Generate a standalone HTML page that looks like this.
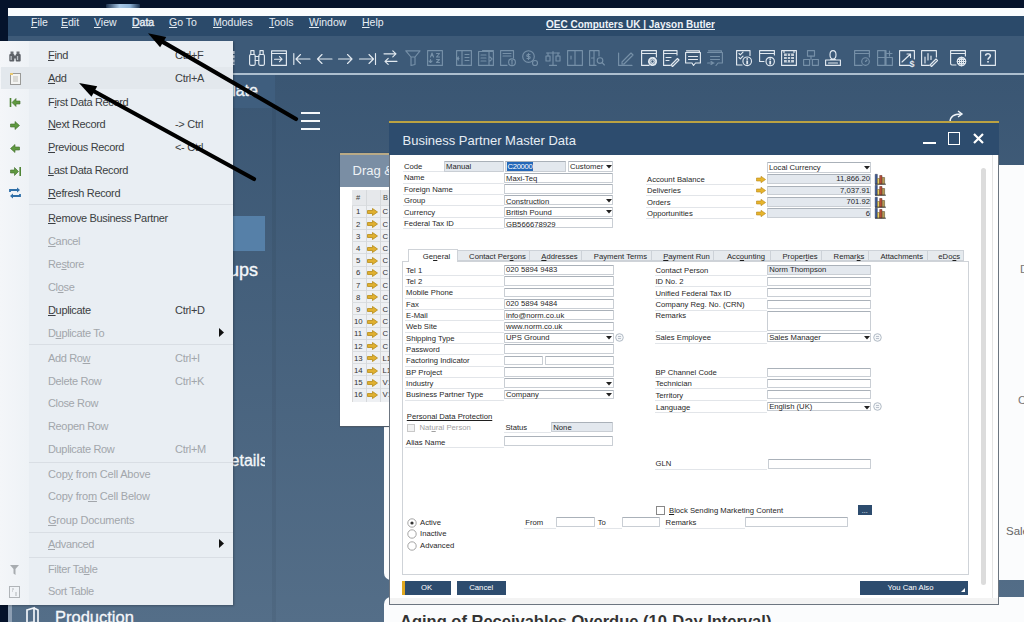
<!DOCTYPE html>
<html><head><meta charset="utf-8"><style>
*{margin:0;padding:0;box-sizing:border-box}
html,body{width:1024px;height:622px;overflow:hidden}
body{position:relative;font-family:"Liberation Sans",sans-serif;background:#3e5b7a}
.a{position:absolute}
.t{position:absolute;white-space:nowrap}

u{text-decoration:underline;text-underline-offset:1px;text-decoration-thickness:1px}
svg{position:absolute;overflow:visible}
</style></head><body>
<div class="a" style="left:8px;top:74px;width:1016px;height:548px;background:linear-gradient(#3a5673,#546e88)"></div>
<div class="a" style="left:0px;top:0px;width:1024px;height:8px;background:#05132b"></div>
<div class="a" style="left:0px;top:0px;width:8px;height:622px;background:#05132b"></div>
<div class="a" style="left:8px;top:8px;width:1016px;height:8px;background:#f9fcfe"></div>
<div class="a" style="left:106px;top:3.5px;width:34px;height:4px;background:linear-gradient(90deg,rgba(120,170,220,.2),#a9c8e6 40%,#8fb3d6 70%,rgba(120,170,220,.2));border-radius:1px"></div>
<div class="a" style="left:8px;top:16px;width:1016px;height:20px;background:#2b4a6a"></div>
<div class="a" style="left:8px;top:36px;width:1016px;height:37px;background:#3d5a78"></div>
<div class="a" style="left:233px;top:73px;width:791px;height:1.5px;background:#adbfcf"></div>
<div class="t" style="left:31px;top:15.54px;font-size:10.5px;line-height:13.65px;color:#e6edf4;"><u>F</u>ile</div>
<div class="t" style="left:61px;top:15.54px;font-size:10.5px;line-height:13.65px;color:#e6edf4;"><u>E</u>dit</div>
<div class="t" style="left:94px;top:15.54px;font-size:10.5px;line-height:13.65px;color:#e6edf4;"><u>V</u>iew</div>
<div class="t" style="left:132px;top:15.54px;font-size:10.5px;line-height:13.65px;color:#e6edf4;-webkit-text-stroke:0.4px #e6edf4"><u>D</u>ata</div>
<div class="t" style="left:169px;top:15.54px;font-size:10.5px;line-height:13.65px;color:#e6edf4;"><u>G</u>o To</div>
<div class="t" style="left:213px;top:15.54px;font-size:10.5px;line-height:13.65px;color:#e6edf4;"><u>M</u>odules</div>
<div class="t" style="left:269px;top:15.54px;font-size:10.5px;line-height:13.65px;color:#e6edf4;"><u>T</u>ools</div>
<div class="t" style="left:309px;top:15.54px;font-size:10.5px;line-height:13.65px;color:#e6edf4;"><u>W</u>indow</div>
<div class="t" style="left:362px;top:15.54px;font-size:10.5px;line-height:13.65px;color:#e6edf4;"><u>H</u>elp</div>
<div class="t" style="left:546px;top:18.04px;font-size:10px;line-height:13.0px;color:#eef3f8;font-weight:bold"><span style="border-bottom:1px solid #e8eef5;line-height:0.9;display:inline-block">OEC Computers UK | Jayson Butler</span></div>
<div class="a" style="left:8px;top:74px;width:267px;height:548px;background:linear-gradient(#3a5673,#546e88)"></div>
<div class="a" style="left:8px;top:74px;width:267px;height:34px;background:#3f5e7e"></div>
<div class="a" style="left:272px;top:108px;width:4px;height:514px;background:rgba(0,0,0,.05)"></div>
<div class="a" style="left:233px;top:73px;width:60px;height:1.5px;background:#adbfcf"></div>
<div class="a" style="left:8px;top:74px;width:257px;height:548px;overflow:hidden"><div class="t" style="left:185px;top:7.75px;font-size:16px;line-height:18px;color:#eef2f6;-webkit-text-stroke:0.35px #eef2f6">Template</div><div class="a" style="left:120px;top:142px;width:137px;height:35px;background:#5680a8"></div><div class="t" style="left:191px;top:185.5px;font-size:18px;line-height:20px;color:#f4f7fa;-webkit-text-stroke:0.35px #f4f7fa">Groups</div><div class="t" style="left:211px;top:378.4px;font-size:16px;line-height:18px;color:#f4f7fa;font-weight:normal;-webkit-text-stroke:0.3px #f4f7fa">Details</div></div>
<div class="a" style="left:8px;top:605px;width:4px;height:17px;background:#8d9fb3"></div>
<svg style="left:25px;top:607px" width="16" height="16" viewBox="0 0 16 16"><path d="M2 3L9 1V15L2 16Z M9 1L13 3V16H2" fill="none" stroke="#f0f4f8" stroke-width="1.7"/></svg>
<div class="t" style="left:55px;top:607.06px;font-size:16.5px;line-height:21.45px;color:#f4f7fa;-webkit-text-stroke:0.3px #f4f7fa">Production</div>
<div class="a" style="left:301px;top:112px;width:19px;height:2.4px;background:#f4f7fa"></div>
<div class="a" style="left:301px;top:120px;width:19px;height:2.4px;background:#f4f7fa"></div>
<div class="a" style="left:301px;top:128px;width:19px;height:2.4px;background:#f4f7fa"></div>
<div class="a" style="left:384px;top:164.5px;width:660px;height:415px;background:#fbfcfd;border-radius:7px"></div>
<div class="a" style="left:384px;top:597px;width:660px;height:40px;background:#fbfcfd;border-radius:7px"></div>
<div class="t" style="left:1006px;top:524.04px;font-size:11.5px;line-height:14.95px;color:#666;">Sales</div>
<div class="t" style="left:1018px;top:393.14px;font-size:11.5px;line-height:14.95px;color:#777;">C</div>
<div class="t" style="left:1020px;top:261.54px;font-size:11.5px;line-height:14.95px;color:#777;">D</div>
<div class="t" style="left:400px;top:610.96px;font-size:16.5px;line-height:21.45px;color:#333;font-weight:bold">Aging of Receivables Overdue (10-Day Interval)</div>
<svg style="left:948px;top:109px" width="18" height="14" viewBox="0 0 18 14"><path d="M2 13C2 7 6 5 13 5" fill="none" stroke="#f0f4f8" stroke-width="1.4"/><path d="M10 2L14 5L10 8" fill="none" stroke="#f0f4f8" stroke-width="1.4"/></svg>
<div class="a" style="left:339.5px;top:153px;width:60px;height:274px;background:#fff;border-bottom:1px solid #4d5a68;box-shadow:0 0 1px rgba(0,0,0,.3)"></div>
<div class="a" style="left:340px;top:153px;width:60px;height:2px;background:#b9aa86"></div>
<div class="a" style="left:340px;top:155px;width:60px;height:32px;background:#7a8ea4"></div>
<div class="t" style="left:352.5px;top:163.05px;font-size:13px;line-height:16.9px;color:#eef2f6;">Drag &amp; Drop</div>
<div class="a" style="left:352px;top:190px;width:40px;height:212px;background:#eef0f3;border-left:1px solid #d8d8d8;border-top:1px solid #d8d8d8"></div>
<div class="a" style="left:352px;top:190px;width:40px;height:15px;background:#e6e8eb"></div>
<div class="t" style="left:356px;top:192.53px;font-size:7.5px;line-height:9.75px;color:#444;">#</div>
<div class="t" style="left:383px;top:192.53px;font-size:7.5px;line-height:9.75px;color:#444;">B</div>
<div class="a" style="left:352px;top:205px;width:40px;height:1px;background:#dadde0"></div>
<div class="t" style="left:356px;top:207.43px;font-size:7.8px;line-height:10.14px;color:#333;">1</div>
<svg style="left:367px;top:208.0px" width="11" height="8" viewBox="0 0 11 8"><path d="M0.5 2.5H5.5V0.5L10.5 4L5.5 7.5V5.5H0.5Z" fill="#e0b030" stroke="#b58a18" stroke-width=".8"/></svg>
<div class="t" style="left:382.5px;top:207.43px;font-size:7.8px;line-height:10.14px;color:#333;">C</div>
<div class="a" style="left:352px;top:217px;width:40px;height:1px;background:#dadde0"></div>
<div class="t" style="left:356px;top:219.63px;font-size:7.8px;line-height:10.14px;color:#333;">2</div>
<svg style="left:367px;top:220.2px" width="11" height="8" viewBox="0 0 11 8"><path d="M0.5 2.5H5.5V0.5L10.5 4L5.5 7.5V5.5H0.5Z" fill="#e0b030" stroke="#b58a18" stroke-width=".8"/></svg>
<div class="t" style="left:382.5px;top:219.63px;font-size:7.8px;line-height:10.14px;color:#333;">C</div>
<div class="a" style="left:352px;top:229px;width:40px;height:1px;background:#dadde0"></div>
<div class="t" style="left:356px;top:231.83px;font-size:7.8px;line-height:10.14px;color:#333;">3</div>
<svg style="left:367px;top:232.4px" width="11" height="8" viewBox="0 0 11 8"><path d="M0.5 2.5H5.5V0.5L10.5 4L5.5 7.5V5.5H0.5Z" fill="#e0b030" stroke="#b58a18" stroke-width=".8"/></svg>
<div class="t" style="left:382.5px;top:231.83px;font-size:7.8px;line-height:10.14px;color:#333;">C</div>
<div class="a" style="left:352px;top:241px;width:40px;height:1px;background:#dadde0"></div>
<div class="t" style="left:356px;top:244.03px;font-size:7.8px;line-height:10.14px;color:#333;">4</div>
<svg style="left:367px;top:244.6px" width="11" height="8" viewBox="0 0 11 8"><path d="M0.5 2.5H5.5V0.5L10.5 4L5.5 7.5V5.5H0.5Z" fill="#e0b030" stroke="#b58a18" stroke-width=".8"/></svg>
<div class="t" style="left:382.5px;top:244.03px;font-size:7.8px;line-height:10.14px;color:#333;">C</div>
<div class="a" style="left:352px;top:253px;width:40px;height:1px;background:#dadde0"></div>
<div class="t" style="left:356px;top:256.23px;font-size:7.8px;line-height:10.14px;color:#333;">5</div>
<svg style="left:367px;top:256.8px" width="11" height="8" viewBox="0 0 11 8"><path d="M0.5 2.5H5.5V0.5L10.5 4L5.5 7.5V5.5H0.5Z" fill="#e0b030" stroke="#b58a18" stroke-width=".8"/></svg>
<div class="t" style="left:382.5px;top:256.23px;font-size:7.8px;line-height:10.14px;color:#333;">C</div>
<div class="a" style="left:352px;top:266px;width:40px;height:1px;background:#dadde0"></div>
<div class="t" style="left:356px;top:268.43px;font-size:7.8px;line-height:10.14px;color:#333;">6</div>
<svg style="left:367px;top:269.0px" width="11" height="8" viewBox="0 0 11 8"><path d="M0.5 2.5H5.5V0.5L10.5 4L5.5 7.5V5.5H0.5Z" fill="#e0b030" stroke="#b58a18" stroke-width=".8"/></svg>
<div class="t" style="left:382.5px;top:268.43px;font-size:7.8px;line-height:10.14px;color:#333;">C</div>
<div class="a" style="left:352px;top:278px;width:40px;height:1px;background:#dadde0"></div>
<div class="t" style="left:356px;top:280.63px;font-size:7.8px;line-height:10.14px;color:#333;">7</div>
<svg style="left:367px;top:281.2px" width="11" height="8" viewBox="0 0 11 8"><path d="M0.5 2.5H5.5V0.5L10.5 4L5.5 7.5V5.5H0.5Z" fill="#e0b030" stroke="#b58a18" stroke-width=".8"/></svg>
<div class="t" style="left:382.5px;top:280.63px;font-size:7.8px;line-height:10.14px;color:#333;">C</div>
<div class="a" style="left:352px;top:290px;width:40px;height:1px;background:#dadde0"></div>
<div class="t" style="left:356px;top:292.83px;font-size:7.8px;line-height:10.14px;color:#333;">8</div>
<svg style="left:367px;top:293.4px" width="11" height="8" viewBox="0 0 11 8"><path d="M0.5 2.5H5.5V0.5L10.5 4L5.5 7.5V5.5H0.5Z" fill="#e0b030" stroke="#b58a18" stroke-width=".8"/></svg>
<div class="t" style="left:382.5px;top:292.83px;font-size:7.8px;line-height:10.14px;color:#333;">C</div>
<div class="a" style="left:352px;top:302px;width:40px;height:1px;background:#dadde0"></div>
<div class="t" style="left:356px;top:305.03px;font-size:7.8px;line-height:10.14px;color:#333;">9</div>
<svg style="left:367px;top:305.6px" width="11" height="8" viewBox="0 0 11 8"><path d="M0.5 2.5H5.5V0.5L10.5 4L5.5 7.5V5.5H0.5Z" fill="#e0b030" stroke="#b58a18" stroke-width=".8"/></svg>
<div class="t" style="left:382.5px;top:305.03px;font-size:7.8px;line-height:10.14px;color:#333;">C</div>
<div class="a" style="left:352px;top:314px;width:40px;height:1px;background:#dadde0"></div>
<div class="t" style="left:354px;top:317.23px;font-size:7.8px;line-height:10.14px;color:#333;">10</div>
<svg style="left:367px;top:317.8px" width="11" height="8" viewBox="0 0 11 8"><path d="M0.5 2.5H5.5V0.5L10.5 4L5.5 7.5V5.5H0.5Z" fill="#e0b030" stroke="#b58a18" stroke-width=".8"/></svg>
<div class="t" style="left:382.5px;top:317.23px;font-size:7.8px;line-height:10.14px;color:#333;">C</div>
<div class="a" style="left:352px;top:327px;width:40px;height:1px;background:#dadde0"></div>
<div class="t" style="left:354px;top:329.43px;font-size:7.8px;line-height:10.14px;color:#333;">11</div>
<svg style="left:367px;top:330.0px" width="11" height="8" viewBox="0 0 11 8"><path d="M0.5 2.5H5.5V0.5L10.5 4L5.5 7.5V5.5H0.5Z" fill="#e0b030" stroke="#b58a18" stroke-width=".8"/></svg>
<div class="t" style="left:382.5px;top:329.43px;font-size:7.8px;line-height:10.14px;color:#333;">C</div>
<div class="a" style="left:352px;top:339px;width:40px;height:1px;background:#dadde0"></div>
<div class="t" style="left:354px;top:341.63px;font-size:7.8px;line-height:10.14px;color:#333;">12</div>
<svg style="left:367px;top:342.2px" width="11" height="8" viewBox="0 0 11 8"><path d="M0.5 2.5H5.5V0.5L10.5 4L5.5 7.5V5.5H0.5Z" fill="#e0b030" stroke="#b58a18" stroke-width=".8"/></svg>
<div class="t" style="left:382.5px;top:341.63px;font-size:7.8px;line-height:10.14px;color:#333;">C</div>
<div class="a" style="left:352px;top:351px;width:40px;height:1px;background:#dadde0"></div>
<div class="t" style="left:354px;top:353.83px;font-size:7.8px;line-height:10.14px;color:#333;">13</div>
<svg style="left:367px;top:354.4px" width="11" height="8" viewBox="0 0 11 8"><path d="M0.5 2.5H5.5V0.5L10.5 4L5.5 7.5V5.5H0.5Z" fill="#e0b030" stroke="#b58a18" stroke-width=".8"/></svg>
<div class="t" style="left:382.5px;top:353.83px;font-size:7.8px;line-height:10.14px;color:#333;">L1</div>
<div class="a" style="left:352px;top:363px;width:40px;height:1px;background:#dadde0"></div>
<div class="t" style="left:354px;top:366.03px;font-size:7.8px;line-height:10.14px;color:#333;">14</div>
<svg style="left:367px;top:366.6px" width="11" height="8" viewBox="0 0 11 8"><path d="M0.5 2.5H5.5V0.5L10.5 4L5.5 7.5V5.5H0.5Z" fill="#e0b030" stroke="#b58a18" stroke-width=".8"/></svg>
<div class="t" style="left:382.5px;top:366.03px;font-size:7.8px;line-height:10.14px;color:#333;">L1</div>
<div class="a" style="left:352px;top:375px;width:40px;height:1px;background:#dadde0"></div>
<div class="t" style="left:354px;top:378.23px;font-size:7.8px;line-height:10.14px;color:#333;">15</div>
<svg style="left:367px;top:378.8px" width="11" height="8" viewBox="0 0 11 8"><path d="M0.5 2.5H5.5V0.5L10.5 4L5.5 7.5V5.5H0.5Z" fill="#e0b030" stroke="#b58a18" stroke-width=".8"/></svg>
<div class="t" style="left:382.5px;top:378.23px;font-size:7.8px;line-height:10.14px;color:#333;">V1</div>
<div class="a" style="left:352px;top:388px;width:40px;height:1px;background:#dadde0"></div>
<div class="t" style="left:354px;top:390.43px;font-size:7.8px;line-height:10.14px;color:#333;">16</div>
<svg style="left:367px;top:391.0px" width="11" height="8" viewBox="0 0 11 8"><path d="M0.5 2.5H5.5V0.5L10.5 4L5.5 7.5V5.5H0.5Z" fill="#e0b030" stroke="#b58a18" stroke-width=".8"/></svg>
<div class="t" style="left:382.5px;top:390.43px;font-size:7.8px;line-height:10.14px;color:#333;">V1</div>
<div class="a" style="left:366px;top:190px;width:1px;height:212px;background:#d6d9dc"></div>
<div class="a" style="left:380px;top:190px;width:1px;height:212px;background:#d6d9dc"></div>
<svg style="left:232px;top:49.5px" width="5" height="16"><path d="M1.5 1V15" stroke="#d6dee7" stroke-width="2" stroke-dasharray="3 1.2"/></svg>
<svg style="left:249px;top:49.5px" width="16" height="16" viewBox="0 0 16 16"><g fill="none" stroke="#e2e9f0" stroke-width="1.15" stroke-linecap="round" stroke-linejoin="round"><rect x="0.6" y="4.5" width="5.6" height="10.8" rx="1.2"/><rect x="9.8" y="4.5" width="5.6" height="10.8" rx="1.2"/><rect x="1.8" y="0.6" width="3.2" height="3.9"/><rect x="11" y="0.6" width="3.2" height="3.9"/><path d="M6.2 6.5H9.8M6.2 10.5H9.8"/></g></svg>
<svg style="left:271px;top:49.5px" width="16" height="16" viewBox="0 0 16 16"><g fill="none" stroke="#e2e9f0" stroke-width="1.15" stroke-linecap="round" stroke-linejoin="round"><rect x="0.6" y="0.8" width="14.8" height="14.6"/><path d="M0.6 3.5H15.4M3.5 9.2H11M8.5 6.7L11 9.2L8.5 11.7"/></g></svg>
<svg style="left:293px;top:49.5px" width="16" height="16" viewBox="0 0 16 16"><g fill="none" stroke="#e2e9f0" stroke-width="1.15" stroke-linecap="round" stroke-linejoin="round"><path d="M0.8 3.5V14.5M3 9H17M7.5 4.5L3 9L7.5 13.5"/></g></svg>
<svg style="left:316px;top:49.5px" width="16" height="16" viewBox="0 0 16 16"><g fill="none" stroke="#e2e9f0" stroke-width="1.15" stroke-linecap="round" stroke-linejoin="round"><path d="M1.5 9H16M6 4.5L1.5 9L6 13.5"/></g></svg>
<svg style="left:338px;top:49.5px" width="16" height="16" viewBox="0 0 16 16"><g fill="none" stroke="#e2e9f0" stroke-width="1.15" stroke-linecap="round" stroke-linejoin="round"><path d="M0.5 9H14M9.5 4.5L14 9L9.5 13.5"/></g></svg>
<svg style="left:359px;top:49.5px" width="16" height="16" viewBox="0 0 16 16"><g fill="none" stroke="#e2e9f0" stroke-width="1.15" stroke-linecap="round" stroke-linejoin="round"><path d="M0.5 9H14.5M10 4.5L14.5 9L10 13.5M16.5 3.5V14.5"/></g></svg>
<svg style="left:383px;top:49.5px" width="16" height="16" viewBox="0 0 16 16"><g fill="none" stroke="#e2e9f0" stroke-width="1.15" stroke-linecap="round" stroke-linejoin="round"><path d="M1 3.8H13M9.8 0.8L13 3.8L9.8 6.8M14 11.3H2M5.2 8.3L2 11.3L5.2 14.3"/></g></svg>
<svg style="left:405px;top:49.5px" width="16" height="16" viewBox="0 0 16 16"><g fill="none" stroke="#7690a8" stroke-width="1.15" stroke-linecap="round" stroke-linejoin="round"><path d="M0.8 0.8H15L10 7V14.5L6 15.5V7Z M6 7H10"/></g></svg>
<svg style="left:427px;top:49.5px" width="16" height="16" viewBox="0 0 16 16"><g fill="none" stroke="#7690a8" stroke-width="1.15" stroke-linecap="round" stroke-linejoin="round"><rect x="0.6" y="0.6" width="14.8" height="14.8"/><path d="M3.5 7L5 3L6.5 7M4 5.5H6M9.5 3.5H12.5L9.5 7H12.5M3.5 9.5V12.5M5 11L3.5 12.5L2 11M9.5 9.5H12.5L9.5 12.5H12.5"/></g></svg>
<svg style="left:456px;top:49.5px" width="16" height="16" viewBox="0 0 16 16"><g fill="none" stroke="#7690a8" stroke-width="1.15" stroke-linecap="round" stroke-linejoin="round"><rect x="0.6" y="0.6" width="14.8" height="14.8"/><path d="M6 0.6V15.4M3 8.5H1.5M9 4.5H13M9 7.5H13M9 10.5H13M2.5 7L1 8.5L2.5 10"/></g></svg>
<svg style="left:478px;top:49.5px" width="16" height="16" viewBox="0 0 16 16"><g fill="none" stroke="#7690a8" stroke-width="1.15" stroke-linecap="round" stroke-linejoin="round"><rect x="0.6" y="1.5" width="14.8" height="13.9"/><path d="M11 1.5V15.4M3 5H8M3 8H8M3 11H8M12 7L14 9L12 11M4.5 0.6H15.4"/></g></svg>
<svg style="left:500px;top:49.5px" width="16" height="16" viewBox="0 0 16 16"><g fill="none" stroke="#7690a8" stroke-width="1.15" stroke-linecap="round" stroke-linejoin="round"><path d="M0.6 0.6H13.5V8M0.6 0.6V15.4H7M3 3.5H11M3 6H11"/><circle cx="12" cy="12.2" r="3.4"/><path d="M12 10.2V14.2"/></g></svg>
<svg style="left:522px;top:49.5px" width="16" height="16" viewBox="0 0 16 16"><g fill="none" stroke="#7690a8" stroke-width="1.15" stroke-linecap="round" stroke-linejoin="round"><circle cx="6.5" cy="6.5" r="5.8"/><path d="M6.5 3.5V9.5M8 4.5H5.8C4.5 4.5 4.5 6.5 5.8 6.5H7.2C8.5 6.5 8.5 8.5 7.2 8.5H5"/><circle cx="13" cy="13" r="2.5"/></g></svg>
<svg style="left:545px;top:49.5px" width="16" height="16" viewBox="0 0 16 16"><g fill="none" stroke="#7690a8" stroke-width="1.15" stroke-linecap="round" stroke-linejoin="round"><path d="M8 1.5V15.4M1.5 3H14.5M4.5 15.4H11.5"/><rect x="1" y="6" width="4" height="5"/><rect x="11" y="6" width="4" height="5"/><path d="M3 3V6M13 3V6"/></g></svg>
<svg style="left:567px;top:49.5px" width="16" height="16" viewBox="0 0 16 16"><g fill="none" stroke="#7690a8" stroke-width="1.15" stroke-linecap="round" stroke-linejoin="round"><rect x="0.6" y="0.6" width="14.8" height="14.8"/><path d="M8 0.6V15.4M4 6V9"/></g></svg>
<svg style="left:589px;top:49.5px" width="16" height="16" viewBox="0 0 16 16"><g fill="none" stroke="#7690a8" stroke-width="1.15" stroke-linecap="round" stroke-linejoin="round"><path d="M0.6 0.6H10V6M0.6 0.6V15.4H7M5 0.6V15.4M2.5 8H4.5"/><circle cx="11" cy="10.5" r="2.8"/><path d="M13 12.5L15.4 15"/></g></svg>
<svg style="left:618px;top:49.5px" width="16" height="16" viewBox="0 0 16 16"><g fill="none" stroke="#7690a8" stroke-width="1.15" stroke-linecap="round" stroke-linejoin="round"><path d="M0.6 3V15.4H14M4 12L13 3L15 5L6 14H4Z"/></g></svg>
<svg style="left:641px;top:49.5px" width="16" height="16" viewBox="0 0 16 16"><g fill="none" stroke="#e2e9f0" stroke-width="1.15" stroke-linecap="round" stroke-linejoin="round"><path d="M8 15.4H0.6V0.6H15.4V7M0.6 3.5H15.4"/><circle cx="11.5" cy="11.5" r="1.8"/><circle cx="11.5" cy="11.5" r="3.6" stroke-width="1.9" stroke-dasharray="1.4 1.1"/></g></svg>
<svg style="left:663px;top:49.5px" width="16" height="16" viewBox="0 0 16 16"><g fill="none" stroke="#e2e9f0" stroke-width="1.15" stroke-linecap="round" stroke-linejoin="round"><path d="M7 15.4H0.6V0.6H14V5M0.6 3.5H14M3 7.5H8M3 10.5H6M8 15L14.5 8.5L16 10L9.5 16.5Z"/></g></svg>
<svg style="left:685px;top:49.5px" width="16" height="16" viewBox="0 0 16 16"><g fill="none" stroke="#e2e9f0" stroke-width="1.15" stroke-linecap="round" stroke-linejoin="round"><path d="M1.5 0.8H14.4V2.2M0.6 2.5H15.4V13H10.5L8.5 15.5L7 13H0.6Z M3.5 6.5H12.5M3.5 9.5H12.5"/></g></svg>
<svg style="left:707px;top:49.5px" width="16" height="16" viewBox="0 0 16 16"><g fill="none" stroke="#7690a8" stroke-width="1.15" stroke-linecap="round" stroke-linejoin="round"><path d="M1.5 0.8H14.4V2.2M0.6 2.5H15.4V13H11L9 15.5M7 13H0.6Z M3.5 6.5H12.5M3.5 9.5H12.5M4 11.5L6.5 13L4 14.5"/></g></svg>
<svg style="left:736px;top:49.5px" width="16" height="16" viewBox="0 0 16 16"><g fill="none" stroke="#e2e9f0" stroke-width="1.15" stroke-linecap="round" stroke-linejoin="round"><path d="M6 15H0.6V0.6H14V5.5M3 3.5L4.3 4.8L7 2.2M3 7.5L4.3 8.8L7 6.2"/><circle cx="11.2" cy="11.3" r="4.3"/></g><path d="M10.3 10.5h1.8v3.8h-1.8z" fill="#e2e9f0"/><circle cx="11.2" cy="8.9" r=".9" fill="#e2e9f0"/></svg>
<svg style="left:759px;top:49.5px" width="16" height="16" viewBox="0 0 16 16"><g fill="none" stroke="#e2e9f0" stroke-width="1.15" stroke-linecap="round" stroke-linejoin="round"><path d="M0.6 3.5V11.5H5M0.6 0.6H15.4V5M0.6 0.6V3.5H15.4"/><circle cx="11.2" cy="11.5" r="4.2"/></g><path d="M10.3 10.7h1.8v3.8h-1.8z" fill="#e2e9f0"/><circle cx="11.2" cy="9.1" r=".9" fill="#e2e9f0"/></svg>
<svg style="left:781px;top:49.5px" width="16" height="16" viewBox="0 0 16 16"><g fill="none" stroke="#e2e9f0" stroke-width="1.15" stroke-linecap="round" stroke-linejoin="round"><rect x="0.6" y="0.6" width="14.8" height="14.8"/><path d="M3 0.6V2.5M13 0.6V2.5"/></g><rect x="3" y="3.5" width="10" height="9" fill="#c9d2db"/><path d="M3 6.5H13M3 9.5H13M6.3 3.5V12.5M9.6 3.5V12.5" stroke="#3d5a78" stroke-width="1"/></svg>
<svg style="left:803px;top:49.5px" width="16" height="16" viewBox="0 0 16 16"><g fill="none" stroke="#7690a8" stroke-width="1.15" stroke-linecap="round" stroke-linejoin="round"><rect x="4.5" y="0.6" width="7" height="5.5"/><rect x="0.6" y="9.5" width="6" height="5.8"/><rect x="9.4" y="9.5" width="6" height="5.8"/><path d="M8 6.1V9.5"/></g></svg>
<svg style="left:825px;top:49.5px" width="16" height="16" viewBox="0 0 16 16"><g fill="none" stroke="#e2e9f0" stroke-width="1.15" stroke-linecap="round" stroke-linejoin="round"><ellipse cx="8" cy="4.8" rx="3" ry="4.2"/><path d="M5.5 9.5H10.5M0.6 10V15.4H15.4V10H0.6Z M3.5 13H12.5"/></g></svg>
<svg style="left:854px;top:49.5px" width="16" height="16" viewBox="0 0 16 16"><g fill="none" stroke="#7690a8" stroke-width="1.15" stroke-linecap="round" stroke-linejoin="round"><path d="M8 15.4H0.6V0.6H15.4V7M0.6 3.5H15.4"/><circle cx="11.5" cy="11.5" r="3.8"/><path d="M11.5 11.5L13 10"/></g></svg>
<svg style="left:877px;top:49.5px" width="16" height="16" viewBox="0 0 16 16"><g fill="none" stroke="#7690a8" stroke-width="1.15" stroke-linecap="round" stroke-linejoin="round"><path d="M0.6 0.6H9V7.5H15.4V15.4H0.6Z M0.6 7.5H9V15.4M8 0.6V15.4M12.5 1V6M10 3.5H15"/></g></svg>
<svg style="left:899px;top:49.5px" width="16" height="16" viewBox="0 0 16 16"><g fill="none" stroke="#e2e9f0" stroke-width="1.15" stroke-linecap="round" stroke-linejoin="round"><path d="M11 15.4H0.6V0.6H15.4V9M3 12L11.5 4M8 4H11.5V7.5"/></g><text x="10.5" y="16.8" font-size="9" font-weight="bold" fill="#e2e9f0" font-family="Liberation Sans">$</text></svg>
<svg style="left:921px;top:49.5px" width="16" height="16" viewBox="0 0 16 16"><g fill="none" stroke="#e2e9f0" stroke-width="1.15" stroke-linecap="round" stroke-linejoin="round"><path d="M8 15.4H0.6V0.6H15.4V7M4 7V13M7 3.5V10M10 6V9.5M9 15L15 9L16.5 10.5L10.5 16.5Z"/></g></svg>
<svg style="left:949.5px;top:49.5px" width="16" height="16" viewBox="0 0 16 16"><g fill="none" stroke="#e2e9f0" stroke-width="1.15" stroke-linecap="round" stroke-linejoin="round"><path d="M6 15H2A1.4 1.4 0 0 1 0.6 13.6V0.6H15.4V6M0.6 3.5H15.4"/><circle cx="11.5" cy="11.5" r="4.2"/><path d="M7.3 11.5H15.7M11.5 7.3V15.7M8 9.5H15M8 13.5H15"/><ellipse cx="11.5" cy="11.5" rx="2" ry="4.2"/></g></svg>
<svg style="left:979.5px;top:49.5px" width="16" height="16" viewBox="0 0 16 16"><g fill="none" stroke="#e2e9f0" stroke-width="1.15" stroke-linecap="round" stroke-linejoin="round"><rect x="0.6" y="0.6" width="14.8" height="14.8"/></g><path d="M5.6 5.8C5.6 3.2 10.4 3.2 10.4 5.8C10.4 7.6 8 7.6 8 9.8" fill="none" stroke="#e2e9f0" stroke-width="1.5"/><rect x="7.2" y="11" width="1.6" height="1.6" fill="#e2e9f0"/></svg>
<div class="a f" style="left:0;top:0;width:1024px;height:622px">
<div class="a" style="left:389px;top:121px;width:610px;height:484px;background:#f3f3f3;border:1px solid #6c7580;border-top:none"></div>
<div class="a" style="left:389px;top:121px;width:610px;height:2px;background:#bba242"></div>
<div class="a" style="left:389px;top:123px;width:610px;height:32px;background:#2d4c6e"></div>
<div class="t" style="left:402.5px;top:132.75px;font-size:13px;line-height:16.9px;color:#e6edf4;">Business Partner Master Data</div>
<div class="a" style="left:923px;top:142px;width:13px;height:2px;background:#fff"></div>
<div class="a" style="left:947.5px;top:132.3px;width:12.8px;height:12.5px;border:1.8px solid #fff"></div>
<svg style="left:973px;top:133px" width="11" height="11" viewBox="0 0 11 11"><path d="M1 1L10 10M10 1L1 10" stroke="#fff" stroke-width="2.2"/></svg>
<div class="a" style="left:390px;top:155px;width:608px;height:443px;background:#fff"></div>
<div class="a" style="left:992px;top:155px;width:1px;height:443px;background:#e4e4e4"></div>
<div class="a" style="left:980.5px;top:168px;width:5.5px;height:417px;background:#dcdcdc;border-radius:3px"></div>
<div class="t" style="left:404px;top:161.83px;font-size:7.7px;line-height:10.01px;color:#1f1f1f;">Code</div>
<div class="a" style="left:403px;top:171px;width:101px;height:1px;background:#e2e5e9"></div>
<div class="t" style="left:404px;top:173.23px;font-size:7.7px;line-height:10.01px;color:#1f1f1f;">Name</div>
<div class="a" style="left:403px;top:183px;width:101px;height:1px;background:#e2e5e9"></div>
<div class="t" style="left:404px;top:184.63px;font-size:7.7px;line-height:10.01px;color:#1f1f1f;">Foreign Name</div>
<div class="a" style="left:403px;top:194px;width:101px;height:1px;background:#e2e5e9"></div>
<div class="t" style="left:404px;top:196.03px;font-size:7.7px;line-height:10.01px;color:#1f1f1f;">Group</div>
<div class="a" style="left:403px;top:205px;width:101px;height:1px;background:#e2e5e9"></div>
<div class="t" style="left:404px;top:207.93px;font-size:7.7px;line-height:10.01px;color:#1f1f1f;">Currency</div>
<div class="a" style="left:403px;top:217px;width:101px;height:1px;background:#e2e5e9"></div>
<div class="t" style="left:404px;top:218.83px;font-size:7.7px;line-height:10.01px;color:#1f1f1f;">Federal Tax ID</div>
<div class="a" style="left:403px;top:228px;width:101px;height:1px;background:#e2e5e9"></div>
<div class="a" style="left:444px;top:161px;width:59.5px;height:10.5px;background:#e3e8ee;border:1px solid #c9ced4;border-top-color:#aab1b9;border-radius:1px"></div>
<div class="t" style="left:446px;top:161.4px;font-size:7.7px;line-height:11.5px;color:#1f1f1f">Manual</div>
<div class="a" style="left:505px;top:161px;width:61px;height:10.5px;background:#e3e8ee;border:1px solid #c9ced4;border-top-color:#aab1b9"></div>
<div class="t" style="left:507px;top:161.8px;font-size:7.7px;line-height:9px;background:#2467b8;color:#fff;padding:0 0.5px;letter-spacing:-0.35px">C20000</div>
<div class="a" style="left:568px;top:161px;width:45px;height:10.5px;background:#fff;border:1px solid #c9ced4;border-top-color:#aab1b9;border-radius:1px"></div>
<div class="t" style="left:570px;top:161.4px;font-size:7.7px;line-height:11.5px;color:#1f1f1f">Customer</div>
<svg style="left:605.5px;top:164.5px" width="6" height="4"><path d="M0 0H6L3 3.5Z" fill="#222"/></svg>
<div class="a" style="left:504px;top:172.6px;width:109px;height:10px;background:#fff;border:1px solid #c9ced4;border-top-color:#aab1b9;border-radius:1px"></div>
<div class="t" style="left:506px;top:173.0px;font-size:7.7px;line-height:11px;color:#1f1f1f">Maxi-Teq</div>
<div class="a" style="left:504px;top:184.0px;width:109px;height:10px;background:#fff;border:1px solid #c9ced4;border-top-color:#aab1b9;border-radius:1px"></div>
<div class="a" style="left:504px;top:195.4px;width:109px;height:10px;background:#fff;border:1px solid #c9ced4;border-top-color:#aab1b9;border-radius:1px"></div>
<div class="t" style="left:506px;top:195.8px;font-size:7.7px;line-height:11px;color:#1f1f1f">Construction</div>
<svg style="left:605.5px;top:198.9px" width="6" height="4"><path d="M0 0H6L3 3.5Z" fill="#222"/></svg>
<div class="a" style="left:504px;top:206.8px;width:109px;height:10px;background:#fff;border:1px solid #c9ced4;border-top-color:#aab1b9;border-radius:1px"></div>
<div class="t" style="left:506px;top:207.20000000000002px;font-size:7.7px;line-height:11px;color:#1f1f1f">British Pound</div>
<svg style="left:605.5px;top:210.3px" width="6" height="4"><path d="M0 0H6L3 3.5Z" fill="#222"/></svg>
<div class="a" style="left:504px;top:218.2px;width:109px;height:10px;background:#fff;border:1px solid #c9ced4;border-top-color:#aab1b9;border-radius:1px"></div>
<div class="t" style="left:506px;top:218.6px;font-size:7.7px;line-height:11px;color:#1f1f1f">GB566678929</div>
<div class="a" style="left:767px;top:162px;width:104px;height:10.5px;background:#fff;border:1px solid #c9ced4;border-top-color:#aab1b9;border-radius:1px"></div>
<div class="t" style="left:769px;top:162.4px;font-size:7.7px;line-height:11.5px;color:#1f1f1f">Local Currency</div>
<svg style="left:863.5px;top:165.5px" width="6" height="4"><path d="M0 0H6L3 3.5Z" fill="#222"/></svg>
<div class="t" style="left:647px;top:174.63px;font-size:7.7px;line-height:10.01px;color:#1f1f1f;">Account Balance</div>
<div class="a" style="left:646px;top:184px;width:108px;height:1px;background:#e2e5e9"></div>
<svg style="left:755.5px;top:175.5px" width="10" height="7" viewBox="0 0 10 7"><path d="M0.5 2H5V0.3L9.6 3.5L5 6.7V5H0.5Z" fill="#e6b42c" stroke="#b8871a" stroke-width=".6"/></svg>
<div class="a" style="left:767px;top:174px;width:104px;height:9.5px;background:#e3e8ee;border:1px solid #c9ced4;border-top-color:#aab1b9;border-radius:1px"></div>
<div class="t" style="left:767px;top:174.4px;width:103px;text-align:right;font-size:7.7px;line-height:10.5px;color:#1f1f1f">11,866.20</div>
<svg style="left:874.5px;top:173.5px" width="11" height="10.5" viewBox="0 0 11 10.5"><path d="M0.2 0.3H2.3V10.2H0.2z" fill="#3d5a96" stroke="#26344f" stroke-width=".5"/><path d="M2.5 4.5H4.5V10.2H2.5z" fill="#e8d060" stroke="#6a5a20" stroke-width=".5"/><path d="M4.7 1.5H7V10.2H4.7z" fill="#c0503a" stroke="#5a2a20" stroke-width=".5"/><path d="M7.2 3.5H9.6V10.2H7.2z" fill="#b89a50" stroke="#4a4028" stroke-width=".5"/><path d="M0 10.2H11" stroke="#333" stroke-width=".8"/></svg>
<div class="t" style="left:647px;top:186.13px;font-size:7.7px;line-height:10.01px;color:#1f1f1f;">Deliveries</div>
<div class="a" style="left:646px;top:195px;width:108px;height:1px;background:#e2e5e9"></div>
<svg style="left:755.5px;top:187.0px" width="10" height="7" viewBox="0 0 10 7"><path d="M0.5 2H5V0.3L9.6 3.5L5 6.7V5H0.5Z" fill="#e6b42c" stroke="#b8871a" stroke-width=".6"/></svg>
<div class="a" style="left:767px;top:185.5px;width:104px;height:9.5px;background:#e3e8ee;border:1px solid #c9ced4;border-top-color:#aab1b9;border-radius:1px"></div>
<div class="t" style="left:767px;top:185.9px;width:103px;text-align:right;font-size:7.7px;line-height:10.5px;color:#1f1f1f">7,037.91</div>
<svg style="left:874.5px;top:185.0px" width="11" height="10.5" viewBox="0 0 11 10.5"><path d="M0.2 0.3H2.3V10.2H0.2z" fill="#3d5a96" stroke="#26344f" stroke-width=".5"/><path d="M2.5 4.5H4.5V10.2H2.5z" fill="#e8d060" stroke="#6a5a20" stroke-width=".5"/><path d="M4.7 1.5H7V10.2H4.7z" fill="#c0503a" stroke="#5a2a20" stroke-width=".5"/><path d="M7.2 3.5H9.6V10.2H7.2z" fill="#b89a50" stroke="#4a4028" stroke-width=".5"/><path d="M0 10.2H11" stroke="#333" stroke-width=".8"/></svg>
<div class="t" style="left:647px;top:197.63px;font-size:7.7px;line-height:10.01px;color:#1f1f1f;">Orders</div>
<div class="a" style="left:646px;top:207px;width:108px;height:1px;background:#e2e5e9"></div>
<svg style="left:755.5px;top:198.5px" width="10" height="7" viewBox="0 0 10 7"><path d="M0.5 2H5V0.3L9.6 3.5L5 6.7V5H0.5Z" fill="#e6b42c" stroke="#b8871a" stroke-width=".6"/></svg>
<div class="a" style="left:767px;top:197px;width:104px;height:9.5px;background:#e3e8ee;border:1px solid #c9ced4;border-top-color:#aab1b9;border-radius:1px"></div>
<div class="t" style="left:767px;top:197.4px;width:103px;text-align:right;font-size:7.7px;line-height:10.5px;color:#1f1f1f">701.92</div>
<svg style="left:874.5px;top:196.5px" width="11" height="10.5" viewBox="0 0 11 10.5"><path d="M0.2 0.3H2.3V10.2H0.2z" fill="#3d5a96" stroke="#26344f" stroke-width=".5"/><path d="M2.5 4.5H4.5V10.2H2.5z" fill="#e8d060" stroke="#6a5a20" stroke-width=".5"/><path d="M4.7 1.5H7V10.2H4.7z" fill="#c0503a" stroke="#5a2a20" stroke-width=".5"/><path d="M7.2 3.5H9.6V10.2H7.2z" fill="#b89a50" stroke="#4a4028" stroke-width=".5"/><path d="M0 10.2H11" stroke="#333" stroke-width=".8"/></svg>
<div class="t" style="left:647px;top:209.03px;font-size:7.7px;line-height:10.01px;color:#1f1f1f;">Opportunities</div>
<div class="a" style="left:646px;top:218px;width:108px;height:1px;background:#e2e5e9"></div>
<svg style="left:755.5px;top:209.9px" width="10" height="7" viewBox="0 0 10 7"><path d="M0.5 2H5V0.3L9.6 3.5L5 6.7V5H0.5Z" fill="#e6b42c" stroke="#b8871a" stroke-width=".6"/></svg>
<div class="a" style="left:767px;top:208.4px;width:104px;height:9.5px;background:#e3e8ee;border:1px solid #c9ced4;border-top-color:#aab1b9;border-radius:1px"></div>
<div class="t" style="left:767px;top:208.8px;width:103px;text-align:right;font-size:7.7px;line-height:10.5px;color:#1f1f1f">6</div>
<svg style="left:874.5px;top:207.9px" width="11" height="10.5" viewBox="0 0 11 10.5"><path d="M0.2 0.3H2.3V10.2H0.2z" fill="#3d5a96" stroke="#26344f" stroke-width=".5"/><path d="M2.5 4.5H4.5V10.2H2.5z" fill="#e8d060" stroke="#6a5a20" stroke-width=".5"/><path d="M4.7 1.5H7V10.2H4.7z" fill="#c0503a" stroke="#5a2a20" stroke-width=".5"/><path d="M7.2 3.5H9.6V10.2H7.2z" fill="#b89a50" stroke="#4a4028" stroke-width=".5"/><path d="M0 10.2H11" stroke="#333" stroke-width=".8"/></svg>
<div class="a" style="left:402px;top:261px;width:567px;height:314px;background:#fff;border:1px solid #cfd3d8"></div>
<div class="a" style="left:408px;top:249px;width:50px;height:13px;background:#fff;border:1px solid #cfd3d8;border-bottom:none;z-index:1"></div>
<div class="t" style="left:411.5px;top:250.8px;width:50px;text-align:center;font-size:7.7px;line-height:12px;color:#1f1f1f;z-index:2">Ge<u>n</u>eral</div>
<div class="a" style="left:458px;top:250px;width:72px;height:11px;background:#e6eaee;border:1px solid #cdd2d8;border-left:none"></div>
<div class="t" style="left:461.5px;top:250.8px;width:72px;text-align:center;font-size:7.7px;line-height:12px;color:#1f1f1f;z-index:2">Contact Per<u>s</u>ons</div>
<div class="a" style="left:530px;top:250px;width:52px;height:11px;background:#e6eaee;border:1px solid #cdd2d8;border-left:none"></div>
<div class="t" style="left:533.5px;top:250.8px;width:52px;text-align:center;font-size:7.7px;line-height:12px;color:#1f1f1f;z-index:2"><u>A</u>ddresses</div>
<div class="a" style="left:582px;top:250px;width:70px;height:11px;background:#e6eaee;border:1px solid #cdd2d8;border-left:none"></div>
<div class="t" style="left:585.5px;top:250.8px;width:70px;text-align:center;font-size:7.7px;line-height:12px;color:#1f1f1f;z-index:2">Payment Terms</div>
<div class="a" style="left:652px;top:250px;width:62px;height:11px;background:#e6eaee;border:1px solid #cdd2d8;border-left:none"></div>
<div class="t" style="left:655.5px;top:250.8px;width:62px;text-align:center;font-size:7.7px;line-height:12px;color:#1f1f1f;z-index:2"><u>P</u>ayment Run</div>
<div class="a" style="left:714px;top:250px;width:57px;height:11px;background:#e6eaee;border:1px solid #cdd2d8;border-left:none"></div>
<div class="t" style="left:717.5px;top:250.8px;width:57px;text-align:center;font-size:7.7px;line-height:12px;color:#1f1f1f;z-index:2">Acc<u>o</u>unting</div>
<div class="a" style="left:771px;top:250px;width:51px;height:11px;background:#e6eaee;border:1px solid #cdd2d8;border-left:none"></div>
<div class="t" style="left:774.5px;top:250.8px;width:51px;text-align:center;font-size:7.7px;line-height:12px;color:#1f1f1f;z-index:2">Proper<u>t</u>ies</div>
<div class="a" style="left:822px;top:250px;width:47px;height:11px;background:#e6eaee;border:1px solid #cdd2d8;border-left:none"></div>
<div class="t" style="left:825.5px;top:250.8px;width:47px;text-align:center;font-size:7.7px;line-height:12px;color:#1f1f1f;z-index:2">Remar<u>k</u>s</div>
<div class="a" style="left:869px;top:250px;width:58.5px;height:11px;background:#e6eaee;border:1px solid #cdd2d8;border-left:none"></div>
<div class="t" style="left:872.5px;top:250.8px;width:58.5px;text-align:center;font-size:7.7px;line-height:12px;color:#1f1f1f;z-index:2">Attachments</div>
<div class="a" style="left:927.5px;top:250px;width:36.5px;height:11px;background:#e6eaee;border:1px solid #cdd2d8;border-left:none"></div>
<div class="t" style="left:931.0px;top:250.8px;width:36.5px;text-align:center;font-size:7.7px;line-height:12px;color:#1f1f1f;z-index:2">eDo<u>c</u>s</div>
<div class="t" style="left:406px;top:265.53px;font-size:7.7px;line-height:10.01px;color:#1f1f1f;">Tel 1</div>
<div class="a" style="left:405px;top:275px;width:99px;height:1px;background:#e2e5e9"></div>
<div class="a" style="left:504px;top:265.0px;width:109.6px;height:9.8px;background:#fff;border:1px solid #c9ced4;border-top-color:#aab1b9;border-radius:1px"></div>
<div class="t" style="left:506px;top:265.4px;font-size:7.7px;line-height:10.8px;color:#1f1f1f">020 5894 9483</div>
<div class="t" style="left:406px;top:276.86px;font-size:7.7px;line-height:10.01px;color:#1f1f1f;">Tel 2</div>
<div class="a" style="left:405px;top:286px;width:99px;height:1px;background:#e2e5e9"></div>
<div class="a" style="left:504px;top:276.33px;width:109.6px;height:9.8px;background:#fff;border:1px solid #c9ced4;border-top-color:#aab1b9;border-radius:1px"></div>
<div class="t" style="left:406px;top:288.19px;font-size:7.7px;line-height:10.01px;color:#1f1f1f;">Mobile Phone</div>
<div class="a" style="left:405px;top:298px;width:99px;height:1px;background:#e2e5e9"></div>
<div class="a" style="left:504px;top:287.66px;width:109.6px;height:9.8px;background:#fff;border:1px solid #c9ced4;border-top-color:#aab1b9;border-radius:1px"></div>
<div class="t" style="left:406px;top:299.52px;font-size:7.7px;line-height:10.01px;color:#1f1f1f;">Fax</div>
<div class="a" style="left:405px;top:309px;width:99px;height:1px;background:#e2e5e9"></div>
<div class="a" style="left:504px;top:298.99px;width:109.6px;height:9.8px;background:#fff;border:1px solid #c9ced4;border-top-color:#aab1b9;border-radius:1px"></div>
<div class="t" style="left:506px;top:299.39px;font-size:7.7px;line-height:10.8px;color:#1f1f1f">020 5894 9484</div>
<div class="t" style="left:406px;top:310.85px;font-size:7.7px;line-height:10.01px;color:#1f1f1f;">E-Mail</div>
<div class="a" style="left:405px;top:320px;width:99px;height:1px;background:#e2e5e9"></div>
<div class="a" style="left:504px;top:310.32px;width:109.6px;height:9.8px;background:#fff;border:1px solid #c9ced4;border-top-color:#aab1b9;border-radius:1px"></div>
<div class="t" style="left:506px;top:310.71999999999997px;font-size:7.7px;line-height:10.8px;color:#1f1f1f">info@norm.co.uk</div>
<div class="t" style="left:406px;top:322.18px;font-size:7.7px;line-height:10.01px;color:#1f1f1f;">Web Site</div>
<div class="a" style="left:405px;top:332px;width:99px;height:1px;background:#e2e5e9"></div>
<div class="a" style="left:504px;top:321.65px;width:109.6px;height:9.8px;background:#fff;border:1px solid #c9ced4;border-top-color:#aab1b9;border-radius:1px"></div>
<div class="t" style="left:506px;top:322.04999999999995px;font-size:7.7px;line-height:10.8px;color:#1f1f1f">www.norm.co.uk</div>
<div class="t" style="left:406px;top:333.51px;font-size:7.7px;line-height:10.01px;color:#1f1f1f;">Shipping Type</div>
<div class="a" style="left:405px;top:343px;width:99px;height:1px;background:#e2e5e9"></div>
<div class="a" style="left:504px;top:332.98px;width:109.6px;height:9.8px;background:#fff;border:1px solid #c9ced4;border-top-color:#aab1b9;border-radius:1px"></div>
<div class="t" style="left:506px;top:333.38px;font-size:7.7px;line-height:10.8px;color:#1f1f1f">UPS Ground</div>
<svg style="left:606.1px;top:336.48px" width="6" height="4"><path d="M0 0H6L3 3.5Z" fill="#222"/></svg>
<div class="t" style="left:406px;top:344.84px;font-size:7.7px;line-height:10.01px;color:#1f1f1f;">Password</div>
<div class="a" style="left:405px;top:354px;width:99px;height:1px;background:#e2e5e9"></div>
<div class="a" style="left:504px;top:344.31px;width:109.6px;height:9.8px;background:#fff;border:1px solid #c9ced4;border-top-color:#aab1b9;border-radius:1px"></div>
<div class="t" style="left:406px;top:356.17px;font-size:7.7px;line-height:10.01px;color:#1f1f1f;">Factoring Indicator</div>
<div class="a" style="left:405px;top:366px;width:99px;height:1px;background:#e2e5e9"></div>
<div class="a" style="left:504.4px;top:355.64px;width:38.5px;height:9.8px;background:#fff;border:1px solid #c9ced4;border-top-color:#aab1b9;border-radius:1px"></div>
<div class="a" style="left:544.6px;top:355.64px;width:69px;height:9.8px;background:#fff;border:1px solid #c9ced4;border-top-color:#aab1b9;border-radius:1px"></div>
<div class="t" style="left:406px;top:367.50px;font-size:7.7px;line-height:10.01px;color:#1f1f1f;">BP Project</div>
<div class="a" style="left:405px;top:377px;width:99px;height:1px;background:#e2e5e9"></div>
<div class="a" style="left:504px;top:366.97px;width:109.6px;height:9.8px;background:#fff;border:1px solid #c9ced4;border-top-color:#aab1b9;border-radius:1px"></div>
<div class="t" style="left:406px;top:378.83px;font-size:7.7px;line-height:10.01px;color:#1f1f1f;">Industry</div>
<div class="a" style="left:405px;top:388px;width:99px;height:1px;background:#e2e5e9"></div>
<div class="a" style="left:504px;top:378.3px;width:109.6px;height:9.8px;background:#fff;border:1px solid #c9ced4;border-top-color:#aab1b9;border-radius:1px"></div>
<svg style="left:606.1px;top:381.8px" width="6" height="4"><path d="M0 0H6L3 3.5Z" fill="#222"/></svg>
<div class="t" style="left:406px;top:390.16px;font-size:7.7px;line-height:10.01px;color:#1f1f1f;">Business Partner Type</div>
<div class="a" style="left:405px;top:400px;width:99px;height:1px;background:#e2e5e9"></div>
<div class="a" style="left:504px;top:389.63px;width:109.6px;height:9.8px;background:#fff;border:1px solid #c9ced4;border-top-color:#aab1b9;border-radius:1px"></div>
<div class="t" style="left:506px;top:390.03px;font-size:7.7px;line-height:10.8px;color:#1f1f1f">Company</div>
<svg style="left:606.1px;top:393.13px" width="6" height="4"><path d="M0 0H6L3 3.5Z" fill="#222"/></svg>
<svg style="left:615px;top:333.48px" width="9" height="9" viewBox="0 0 9 9"><circle cx="4.5" cy="4.5" r="3.8" fill="#f4f6f8" stroke="#aab4c0" stroke-width=".9"/><path d="M3 3.5h3M3 5.5h3" stroke="#aab4c0" stroke-width=".8"/></svg>
<div class="t" style="left:406.8px;top:411.73px;font-size:7.7px;line-height:10.01px;color:#1f1f1f;"><u>Personal Data Protection</u></div>
<div class="a" style="left:406.8px;top:423.6px;width:8.5px;height:8.5px;background:#f2f2f2;border:1px solid #c9c9c9"></div>
<div class="t" style="left:419.5px;top:423.33px;font-size:7.7px;line-height:10.01px;color:#a0a0a0;">Nat<u>u</u>ral Person</div>
<div class="t" style="left:505.4px;top:423.33px;font-size:7.7px;line-height:10.01px;color:#1f1f1f;">Status</div>
<div class="a" style="left:504px;top:432px;width:47px;height:1px;background:#e2e5e9"></div>
<div class="a" style="left:551.3px;top:422.3px;width:62px;height:9.8px;background:#e3e8ee;border:1px solid #c9ced4;border-top-color:#aab1b9;border-radius:1px"></div>
<div class="t" style="left:553.3px;top:422.7px;font-size:7.7px;line-height:10.8px;color:#1f1f1f">None</div>
<div class="t" style="left:406px;top:437.63px;font-size:7.7px;line-height:10.01px;color:#1f1f1f;">Alias Name</div>
<div class="a" style="left:405px;top:447px;width:99px;height:1px;background:#e2e5e9"></div>
<div class="a" style="left:504px;top:436px;width:109.4px;height:10px;background:#fff;border:1px solid #c9ced4;border-top-color:#aab1b9;border-radius:1px"></div>
<div class="t" style="left:655.4px;top:265.53px;font-size:7.7px;line-height:10.01px;color:#1f1f1f;">Contact Person</div>
<div class="a" style="left:655px;top:275px;width:112px;height:1px;background:#e2e5e9"></div>
<div class="a" style="left:767.2px;top:265px;width:104.2px;height:9.8px;background:#e3e8ee;border:1px solid #c9ced4;border-top-color:#aab1b9;border-radius:1px"></div>
<div class="t" style="left:769.2px;top:265.4px;font-size:7.7px;line-height:10.8px;color:#1f1f1f">Norm Thompson</div>
<div class="t" style="left:655.4px;top:277.23px;font-size:7.7px;line-height:10.01px;color:#1f1f1f;">ID No. 2</div>
<div class="a" style="left:655px;top:286px;width:112px;height:1px;background:#e2e5e9"></div>
<div class="a" style="left:767.2px;top:276.7px;width:104.2px;height:9.2px;background:#fff;border:1px solid #c9ced4;border-top-color:#aab1b9;border-radius:1px"></div>
<div class="t" style="left:655.4px;top:288.83px;font-size:7.7px;line-height:10.01px;color:#1f1f1f;">Unified Federal Tax ID</div>
<div class="a" style="left:655px;top:298px;width:112px;height:1px;background:#e2e5e9"></div>
<div class="a" style="left:767.2px;top:288.3px;width:104.2px;height:9.2px;background:#fff;border:1px solid #c9ced4;border-top-color:#aab1b9;border-radius:1px"></div>
<div class="t" style="left:655.4px;top:300.33px;font-size:7.7px;line-height:10.01px;color:#1f1f1f;">Company Reg. No. (CRN)</div>
<div class="a" style="left:655px;top:310px;width:112px;height:1px;background:#e2e5e9"></div>
<div class="a" style="left:767.2px;top:299.8px;width:104.2px;height:9.6px;background:#fff;border:1px solid #c9ced4;border-top-color:#aab1b9;border-radius:1px"></div>
<div class="t" style="left:655.4px;top:311.23px;font-size:7.7px;line-height:10.01px;color:#1f1f1f;">Remarks</div>
<div class="a" style="left:655px;top:331px;width:112px;height:1px;background:#e2e5e9"></div>
<div class="a" style="left:767.2px;top:310.9px;width:104.2px;height:19.8px;background:#fff;border:1px solid #c9ced4;border-top-color:#aab1b9;border-radius:1px"></div>
<div class="t" style="left:655.4px;top:333.33px;font-size:7.7px;line-height:10.01px;color:#1f1f1f;">Sales Employee</div>
<div class="a" style="left:655px;top:343px;width:112px;height:1px;background:#e2e5e9"></div>
<div class="a" style="left:767.2px;top:332.8px;width:104.2px;height:9.5px;background:#fff;border:1px solid #c9ced4;border-top-color:#aab1b9;border-radius:1px"></div>
<div class="t" style="left:769.2px;top:333.2px;font-size:7.7px;line-height:10.5px;color:#1f1f1f">Sales Manager</div>
<svg style="left:863.9000000000001px;top:336.3px" width="6" height="4"><path d="M0 0H6L3 3.5Z" fill="#222"/></svg>
<div class="t" style="left:655.4px;top:368.03px;font-size:7.7px;line-height:10.01px;color:#1f1f1f;">BP Channel Code</div>
<div class="a" style="left:655px;top:377px;width:112px;height:1px;background:#e2e5e9"></div>
<div class="a" style="left:767.2px;top:367.5px;width:104.2px;height:9.5px;background:#fff;border:1px solid #c9ced4;border-top-color:#aab1b9;border-radius:1px"></div>
<div class="t" style="left:655.4px;top:379.33px;font-size:7.7px;line-height:10.01px;color:#1f1f1f;">Technician</div>
<div class="a" style="left:655px;top:388px;width:112px;height:1px;background:#e2e5e9"></div>
<div class="a" style="left:767.2px;top:378.8px;width:104.2px;height:9.2px;background:#fff;border:1px solid #c9ced4;border-top-color:#aab1b9;border-radius:1px"></div>
<div class="t" style="left:655.4px;top:390.53px;font-size:7.7px;line-height:10.01px;color:#1f1f1f;">Territory</div>
<div class="a" style="left:655px;top:400px;width:112px;height:1px;background:#e2e5e9"></div>
<div class="a" style="left:767.2px;top:390px;width:104.2px;height:9.3px;background:#fff;border:1px solid #c9ced4;border-top-color:#aab1b9;border-radius:1px"></div>
<div class="t" style="left:656px;top:402.53px;font-size:7.7px;line-height:10.01px;color:#1f1f1f;">Language</div>
<div class="a" style="left:655px;top:412px;width:112px;height:1px;background:#e2e5e9"></div>
<div class="a" style="left:767.2px;top:402px;width:104.2px;height:9.2px;background:#fff;border:1px solid #c9ced4;border-top-color:#aab1b9;border-radius:1px"></div>
<div class="t" style="left:769.2px;top:402.4px;font-size:7.7px;line-height:10.2px;color:#1f1f1f">English (UK)</div>
<svg style="left:863.9000000000001px;top:405.5px" width="6" height="4"><path d="M0 0H6L3 3.5Z" fill="#222"/></svg>
<svg style="left:872.5px;top:333.3px" width="9" height="9" viewBox="0 0 9 9"><circle cx="4.5" cy="4.5" r="3.8" fill="#f4f6f8" stroke="#aab4c0" stroke-width=".9"/><path d="M3 3.5h3M3 5.5h3" stroke="#aab4c0" stroke-width=".8"/></svg>
<svg style="left:872.5px;top:402.3px" width="9" height="9" viewBox="0 0 9 9"><circle cx="4.5" cy="4.5" r="3.8" fill="#f4f6f8" stroke="#aab4c0" stroke-width=".9"/><path d="M3 3.5h3M3 5.5h3" stroke="#aab4c0" stroke-width=".8"/></svg>
<div class="t" style="left:655.5px;top:458.93px;font-size:7.7px;line-height:10.01px;color:#1f1f1f;">GLN</div>
<div class="a" style="left:655px;top:469px;width:112px;height:1px;background:#e2e5e9"></div>
<div class="a" style="left:767.6px;top:458.8px;width:103.4px;height:10px;background:#fff;border:1px solid #c9ced4;border-top-color:#aab1b9;border-radius:1px"></div>
<div class="a" style="left:656.3px;top:505.6px;width:8.5px;height:9.5px;background:#fff;border:1px solid #888"></div>
<div class="t" style="left:669px;top:505.73px;font-size:7.7px;line-height:10.01px;color:#1f1f1f;"><u>B</u>lock Sending Marketing Content</div>
<div class="a" style="left:858px;top:505px;width:13.5px;height:10px;background:#2d4c6e"></div>
<div class="t" style="left:858px;top:506px;width:13.5px;text-align:center;font-size:7px;line-height:10px;color:#fff">...</div>
<svg style="left:406.5px;top:517.9px" width="10" height="10" viewBox="0 0 10 10"><circle cx="5" cy="5" r="4.2" fill="#fff" stroke="#9a9a9a" stroke-width=".9"/></svg>
<div class="t" style="left:420px;top:517.93px;font-size:7.7px;line-height:10.01px;color:#1f1f1f;">Active</div>
<svg style="left:406.5px;top:529.4px" width="10" height="10" viewBox="0 0 10 10"><circle cx="5" cy="5" r="4.2" fill="#fff" stroke="#9a9a9a" stroke-width=".9"/></svg>
<div class="t" style="left:420px;top:529.43px;font-size:7.7px;line-height:10.01px;color:#1f1f1f;">Inactive</div>
<svg style="left:406.5px;top:540.9px" width="10" height="10" viewBox="0 0 10 10"><circle cx="5" cy="5" r="4.2" fill="#fff" stroke="#9a9a9a" stroke-width=".9"/></svg>
<div class="t" style="left:420px;top:540.93px;font-size:7.7px;line-height:10.01px;color:#1f1f1f;">Advanced</div>
<svg style="left:406.5px;top:517.9px" width="10" height="10" viewBox="0 0 10 10"><circle cx="5" cy="5" r="1.6" fill="#333"/></svg>
<div class="t" style="left:525.3px;top:517.83px;font-size:7.7px;line-height:10.01px;color:#1f1f1f;">From</div>
<div class="a" style="left:524px;top:528px;width:32px;height:1px;background:#e2e5e9"></div>
<div class="a" style="left:556.4px;top:517px;width:38.6px;height:10.4px;background:#fff;border:1px solid #c9ced4;border-top-color:#aab1b9;border-radius:1px"></div>
<div class="t" style="left:597.7px;top:517.83px;font-size:7.7px;line-height:10.01px;color:#1f1f1f;">To</div>
<div class="a" style="left:597px;top:528px;width:25px;height:1px;background:#e2e5e9"></div>
<div class="a" style="left:621.6px;top:517px;width:38.4px;height:10.4px;background:#fff;border:1px solid #c9ced4;border-top-color:#aab1b9;border-radius:1px"></div>
<div class="t" style="left:665.6px;top:517.83px;font-size:7.7px;line-height:10.01px;color:#1f1f1f;">Remarks</div>
<div class="a" style="left:665px;top:528px;width:80px;height:1px;background:#e2e5e9"></div>
<div class="a" style="left:745px;top:517.3px;width:103.4px;height:10.2px;background:#fff;border:1px solid #c9ced4;border-top-color:#aab1b9;border-radius:1px"></div>
<div class="a" style="left:402px;top:580.5px;width:49px;height:14px;background:#2d4c6e"></div>
<div class="a" style="left:402px;top:580.5px;width:2.5px;height:14px;background:#e0a820"></div>
<div class="t" style="left:402px;top:581px;width:49px;text-align:center;font-size:7.7px;line-height:13px;color:#fff">OK</div>
<div class="a" style="left:457px;top:580.5px;width:48.5px;height:14px;background:#2d4c6e"></div>
<div class="t" style="left:457px;top:581px;width:48.5px;text-align:center;font-size:7.7px;line-height:13px;color:#fff">Cancel</div>
<div class="a" style="left:860.3px;top:580.5px;width:107.5px;height:14px;background:#2d4c6e"></div>
<div class="t" style="left:860.3px;top:581px;width:107.5px;text-align:center;font-size:7.7px;line-height:13px;color:#fff">You Can Also<span style="display:inline-block;width:7px"></span></div>
<svg style="left:960.8px;top:588px" width="4" height="4"><path d="M4 0V4H0Z" fill="#fff"/></svg>
</div>
<div class="a" style="left:0px;top:41px;width:233px;height:564px;background:#e9eef3;box-shadow:1px 1px 2px rgba(0,0,0,.25)"></div>
<div class="a" style="left:0px;top:41px;width:29px;height:564px;background:linear-gradient(90deg,#f4f6f9,#eef2f6)"></div>
<div class="a" style="left:1px;top:67.3px;width:232px;height:21.5px;background:#e3e8ed"></div>
<div class="t" style="left:48px;top:48.34px;font-size:11px;line-height:14.3px;color:#3b3e42;letter-spacing:-0.35px"><u>F</u>ind</div>
<div class="t" style="left:175px;top:48.34px;font-size:11px;line-height:14.3px;color:#3b3e42;letter-spacing:-0.3px">Ctrl+F</div>
<div class="t" style="left:48px;top:71.44px;font-size:11px;line-height:14.3px;color:#3b3e42;letter-spacing:-0.35px"><u>A</u>dd</div>
<div class="t" style="left:175px;top:71.44px;font-size:11px;line-height:14.3px;color:#3b3e42;letter-spacing:-0.3px">Ctrl+A</div>
<div class="t" style="left:48px;top:94.54px;font-size:11px;line-height:14.3px;color:#3b3e42;letter-spacing:-0.35px">F<u>i</u>rst Data Record</div>
<div class="t" style="left:48px;top:117.44px;font-size:11px;line-height:14.3px;color:#3b3e42;letter-spacing:-0.35px"><u>N</u>ext Record</div>
<div class="t" style="left:175px;top:117.44px;font-size:11px;line-height:14.3px;color:#3b3e42;letter-spacing:-0.3px">-&gt; Ctrl</div>
<div class="t" style="left:48px;top:140.34px;font-size:11px;line-height:14.3px;color:#3b3e42;letter-spacing:-0.35px"><u>P</u>revious Record</div>
<div class="t" style="left:175px;top:140.34px;font-size:11px;line-height:14.3px;color:#3b3e42;letter-spacing:-0.3px">&lt;- Ctrl</div>
<div class="t" style="left:48px;top:163.24px;font-size:11px;line-height:14.3px;color:#3b3e42;letter-spacing:-0.35px"><u>L</u>ast Data Record</div>
<div class="t" style="left:48px;top:186.34px;font-size:11px;line-height:14.3px;color:#3b3e42;letter-spacing:-0.35px"><u>R</u>efresh Record</div>
<div class="t" style="left:48px;top:211.04px;font-size:11px;line-height:14.3px;color:#3b3e42;letter-spacing:-0.35px"><u>R</u>emove Business Partner</div>
<div class="t" style="left:48px;top:233.94px;font-size:11px;line-height:14.3px;color:#a2a6ab;letter-spacing:-0.35px"><u>C</u>ancel</div>
<div class="t" style="left:48px;top:256.84px;font-size:11px;line-height:14.3px;color:#a2a6ab;letter-spacing:-0.35px">Re<u>s</u>tore</div>
<div class="t" style="left:48px;top:279.84px;font-size:11px;line-height:14.3px;color:#a2a6ab;letter-spacing:-0.35px">Cl<u>o</u>se</div>
<div class="t" style="left:48px;top:302.84px;font-size:11px;line-height:14.3px;color:#3b3e42;letter-spacing:-0.35px"><u>D</u>uplicate</div>
<div class="t" style="left:175px;top:302.84px;font-size:11px;line-height:14.3px;color:#3b3e42;letter-spacing:-0.3px">Ctrl+D</div>
<div class="t" style="left:48px;top:326.04px;font-size:11px;line-height:14.3px;color:#a2a6ab;letter-spacing:-0.35px">D<u>u</u>plicate To</div>
<div class="t" style="left:48px;top:350.54px;font-size:11px;line-height:14.3px;color:#a2a6ab;letter-spacing:-0.35px">Add Ro<u>w</u></div>
<div class="t" style="left:175px;top:350.54px;font-size:11px;line-height:14.3px;color:#a2a6ab;letter-spacing:-0.3px">Ctrl+I</div>
<div class="t" style="left:48px;top:373.54px;font-size:11px;line-height:14.3px;color:#a2a6ab;letter-spacing:-0.35px">Delete Row</div>
<div class="t" style="left:175px;top:373.54px;font-size:11px;line-height:14.3px;color:#a2a6ab;letter-spacing:-0.3px">Ctrl+K</div>
<div class="t" style="left:48px;top:396.44px;font-size:11px;line-height:14.3px;color:#a2a6ab;letter-spacing:-0.35px">Close Row</div>
<div class="t" style="left:48px;top:418.94px;font-size:11px;line-height:14.3px;color:#a2a6ab;letter-spacing:-0.35px">Reopen Row</div>
<div class="t" style="left:48px;top:441.74px;font-size:11px;line-height:14.3px;color:#a2a6ab;letter-spacing:-0.35px">Duplicate Row</div>
<div class="t" style="left:175px;top:441.74px;font-size:11px;line-height:14.3px;color:#a2a6ab;letter-spacing:-0.3px">Ctrl+M</div>
<div class="t" style="left:48px;top:466.64px;font-size:11px;line-height:14.3px;color:#a2a6ab;letter-spacing:-0.2px">Cop<u>y</u> from Cell Above</div>
<div class="t" style="left:48px;top:489.44px;font-size:11px;line-height:14.3px;color:#a2a6ab;letter-spacing:-0.2px">Copy fro<u>m</u> Cell Below</div>
<div class="t" style="left:48px;top:512.74px;font-size:11px;line-height:14.3px;color:#a2a6ab;letter-spacing:-0.2px"><u>G</u>roup Documents</div>
<div class="t" style="left:48px;top:537.24px;font-size:11px;line-height:14.3px;color:#a2a6ab;letter-spacing:-0.35px"><u>A</u>dvanced</div>
<div class="t" style="left:48px;top:561.84px;font-size:11px;line-height:14.3px;color:#a2a6ab;letter-spacing:-0.35px">Filter Ta<u>b</u>le</div>
<div class="t" style="left:48px;top:584.34px;font-size:11px;line-height:14.3px;color:#a2a6ab;letter-spacing:-0.35px">Sort Table</div>
<div class="a" style="left:29px;top:204px;width:204px;height:1px;background:#d9dee4"></div>
<div class="a" style="left:29px;top:344px;width:204px;height:1px;background:#d9dee4"></div>
<div class="a" style="left:29px;top:462px;width:204px;height:1px;background:#d9dee4"></div>
<div class="a" style="left:29px;top:532px;width:204px;height:1px;background:#d9dee4"></div>
<div class="a" style="left:29px;top:557px;width:204px;height:1px;background:#d9dee4"></div>
<svg style="left:219px;top:327.5px" width="6" height="9"><path d="M0 0L5 4.5L0 9Z" fill="#111"/></svg>
<svg style="left:219px;top:539px" width="6" height="9"><path d="M0 0L5 4.5L0 9Z" fill="#111"/></svg>
<svg style="left:8.5px;top:49.5px" width="12" height="12" viewBox="0 0 12 12"><path d="M1.5 1.5h3v2.5h-3zM7.5 1.5h3v2.5h-3z" fill="#6a6e74"/><rect x="0.3" y="4" width="5" height="7.5" rx="1" fill="#5d6167"/><rect x="6.7" y="4" width="5" height="7.5" rx="1" fill="#5d6167"/><path d="M5 5.5h2v3H5z" fill="#5d6167"/><path d="M1.5 6h1.3v4H1.5zM7.9 6h1.3v4H7.9z" fill="#b9bec4"/></svg>
<svg style="left:10px;top:73px" width="11" height="12" viewBox="0 0 11 12"><rect x="0.5" y="0.5" width="10" height="11" fill="#f4f4f2" stroke="#9a9a98"/><rect x="3" y="3" width="5" height="6" fill="#d8d8d4"/><path d="M0 0h3v2H0z" fill="#e8c870"/></svg>
<svg style="left:10px;top:98px" width="11" height="9" viewBox="0 0 11 9"><path d="M0.5 0v9" stroke="#4f8536" stroke-width="1.6"/><path d="M2 4.5L6 0.5V3H10V6H6V8.5Z" fill="#5e9840" stroke="#3f6d2a" stroke-width=".6"/></svg>
<svg style="left:10px;top:120.5px" width="10" height="9" viewBox="0 0 10 9"><path d="M9.5 4.5L5 0.5V3H0.5V6H5V8.5Z" fill="#5e9840" stroke="#3f6d2a" stroke-width=".6"/></svg>
<svg style="left:10px;top:143.5px" width="10" height="9" viewBox="0 0 10 9"><path d="M0.5 4.5L5 0.5V3H9.5V6H5V8.5Z" fill="#5e9840" stroke="#3f6d2a" stroke-width=".6"/></svg>
<svg style="left:9.5px;top:166.5px" width="11" height="9" viewBox="0 0 11 9"><path d="M10.2 0v9" stroke="#4f8536" stroke-width="1.6"/><path d="M8.5 4.5L4.5 0.5V3H0.5V6H4.5V8.5Z" fill="#5e9840" stroke="#3f6d2a" stroke-width=".6"/></svg>
<svg style="left:9px;top:187px" width="12" height="12" viewBox="0 0 12 12"><path d="M1 5V3h8" stroke="#2f6fa8" stroke-width="1.8" fill="none"/><path d="M8 0.5L11 3L8 5.5Z" fill="#2f6fa8"/><path d="M11 7v2H3" stroke="#2f6fa8" stroke-width="1.8" fill="none"/><path d="M4 6.5L1 9L4 11.5Z" fill="#2f6fa8"/></svg>
<svg style="left:10px;top:565px" width="9" height="10" viewBox="0 0 9 10"><path d="M0 0H9L5.5 4V10L3.5 8.5V4Z" fill="#a8acb0"/></svg>
<svg style="left:9px;top:586px" width="11" height="12" viewBox="0 0 11 12"><rect x="0.5" y="0.5" width="10" height="11" fill="none" stroke="#b0b4b8"/><path d="M3 3h2M3 5h1M6 7h2M6 9h2" stroke="#b0b4b8"/></svg>
<svg style="left:0;top:0" width="1024" height="622"><path d="M161.4 41.1L296.0 119.0" stroke="#000" stroke-width="4.2" stroke-linecap="round"/><path d="M148.0 33.3L160.1 47.3L166.2 36.9Z" fill="#000"/></svg>
<svg style="left:0;top:0" width="1024" height="622"><path d="M92.6 90.5L254.0 179.0" stroke="#000" stroke-width="4.2" stroke-linecap="round"/><path d="M79.0 83.0L91.5 96.7L97.2 86.2Z" fill="#000"/></svg>
</body></html>
